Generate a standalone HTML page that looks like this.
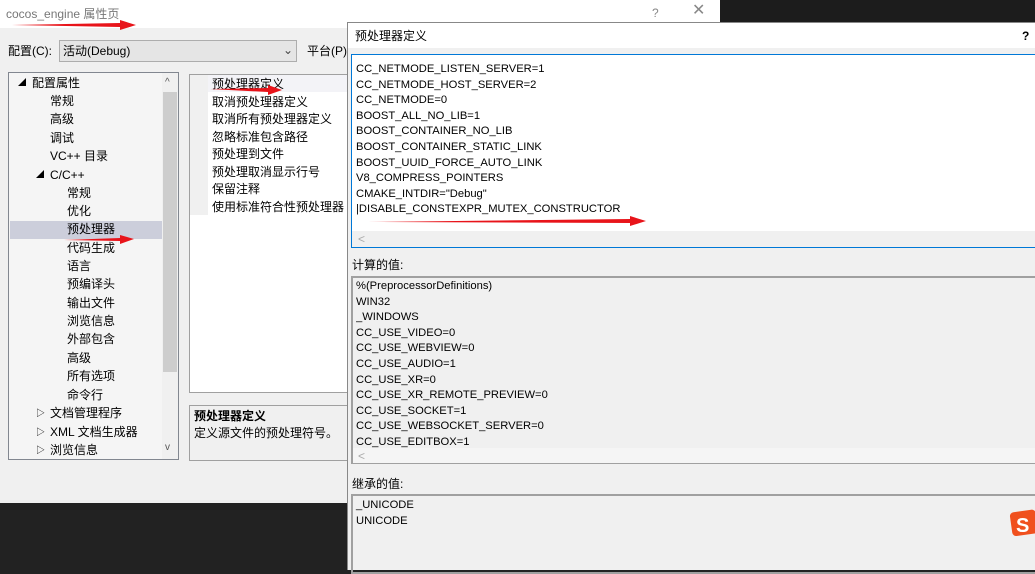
<!DOCTYPE html>
<html><head><meta charset="utf-8"><style>
*{margin:0;padding:0;box-sizing:border-box}
body{width:1035px;height:570px;overflow:hidden;background:#222;position:relative;font-family:"Liberation Sans","Noto Sans CJK SC",sans-serif;font-size:12px;color:#000}
.a{position:absolute}
.t{position:absolute;white-space:nowrap;line-height:16px}
.l{font-size:11.2px}
</style></head><body>
<div class="a" style="left:720px;top:0;width:315px;height:22px;background:#1c1c1c"></div>
<div class="a" style="left:0;top:0;width:720px;height:503px;background:#f0f0f0"></div>
<div class="a" style="left:0;top:0;width:720px;height:28px;background:#fff"></div>
<div class="t" style="left:6px;top:6px;color:#777;font-size:12px">cocos_engine 属性页</div>
<div class="t" style="left:652px;top:5px;color:#888">?</div>
<div class="t" style="left:692px;top:3px;color:#888;font-size:16px">✕</div>
<div class="t" style="left:8px;top:43px">配置(C):</div>
<div class="a" style="left:59px;top:40px;width:238px;height:22px;background:#e5e5e5;border:1px solid #adadad"></div>
<div class="t" style="left:63px;top:43px">活动(Debug)</div>
<div class="t" style="left:283px;top:42px;color:#444">⌄</div>
<div class="t" style="left:307px;top:43px">平台(P):</div>
<div class="a" style="left:8px;top:72px;width:171px;height:388px;background:#f5f5f5;border:1px solid #828790"></div>
<div class="a" style="left:162px;top:73px;width:16px;height:386px;background:#f0f0f0"></div>
<div class="a" style="left:163px;top:92px;width:14px;height:280px;background:#cdcdcd"></div>
<div class="t" style="left:165px;top:75px;font-size:10px;color:#555">^</div>
<div class="t" style="left:165px;top:440px;font-size:10px;color:#555">v</div>
<div class="a" style="left:10px;top:221px;width:152px;height:18px;background:#cccedb"></div>
<div class="t" style="left:18px;top:75px;font-size:8px">◢</div><div class="t" style="left:32px;top:75px">配置属性</div>
<div class="t" style="left:50px;top:93px">常规</div>
<div class="t" style="left:50px;top:111px">高级</div>
<div class="t" style="left:50px;top:130px">调试</div>
<div class="t" style="left:50px;top:148px">VC++ 目录</div>
<div class="t" style="left:36px;top:167px;font-size:8px">◢</div><div class="t" style="left:50px;top:167px">C/C++</div>
<div class="t" style="left:67px;top:185px">常规</div>
<div class="t" style="left:67px;top:203px">优化</div>
<div class="t" style="left:67px;top:221px">预处理器</div>
<div class="t" style="left:67px;top:240px">代码生成</div>
<div class="t" style="left:67px;top:258px">语言</div>
<div class="t" style="left:67px;top:276px">预编译头</div>
<div class="t" style="left:67px;top:295px">输出文件</div>
<div class="t" style="left:67px;top:313px">浏览信息</div>
<div class="t" style="left:67px;top:331px">外部包含</div>
<div class="t" style="left:67px;top:350px">高级</div>
<div class="t" style="left:67px;top:368px">所有选项</div>
<div class="t" style="left:67px;top:387px">命令行</div>
<div class="t" style="left:36px;top:405px;font-size:9px">▷</div><div class="t" style="left:50px;top:405px">文档管理程序</div>
<div class="t" style="left:36px;top:424px;font-size:9px">▷</div><div class="t" style="left:50px;top:424px">XML 文档生成器</div>
<div class="t" style="left:36px;top:442px;font-size:9px">▷</div><div class="t" style="left:50px;top:442px">浏览信息</div>
<div class="a" style="left:189px;top:74px;width:160px;height:319px;background:#fff;border:1px solid #a0a0a0"></div>
<div class="a" style="left:190px;top:75px;width:18px;height:140px;background:#f0f0f0"></div>
<div class="a" style="left:208px;top:75px;width:141px;height:17px;background:#f3f3f7"></div>
<div class="t" style="left:212px;top:76px">预处理器定义</div>
<div class="t" style="left:212px;top:94px">取消预处理器定义</div>
<div class="t" style="left:212px;top:111px">取消所有预处理器定义</div>
<div class="t" style="left:212px;top:129px">忽略标准包含路径</div>
<div class="t" style="left:212px;top:146px">预处理到文件</div>
<div class="t" style="left:212px;top:164px">预处理取消显示行号</div>
<div class="t" style="left:212px;top:181px">保留注释</div>
<div class="t" style="left:212px;top:199px">使用标准符合性预处理器</div>
<div class="a" style="left:189px;top:405px;width:160px;height:56px;border:1px solid #a0a0a0"></div>
<div class="t" style="left:194px;top:408px;font-weight:bold">预处理器定义</div>
<div class="t" style="left:194px;top:425px">定义源文件的预处理符号。</div>
<div class="a" style="left:347px;top:22px;width:688px;height:548px;background:#f0f0f0;border-left:1px solid #888;border-top:1px solid #888"></div>
<div class="a" style="left:348px;top:23px;width:687px;height:25px;background:#fff"></div>
<div class="t" style="left:355px;top:28px">预处理器定义</div>
<div class="t" style="left:1022px;top:28px;font-weight:bold">?</div>
<div class="a" style="left:351px;top:54px;width:690px;height:194px;background:#fff;border:1px solid #0078d7"></div>
<div class="a" style="left:352px;top:231px;width:690px;height:16px;background:#f0f0f0"></div>
<div class="t" style="left:358px;top:231px;color:#aaa">&lt;</div>
<div class="t l" style="left:356px;top:62px;line-height:15.6px">CC_NETMODE_LISTEN_SERVER=1<br>CC_NETMODE_HOST_SERVER=2<br>CC_NETMODE=0<br>BOOST_ALL_NO_LIB=1<br>BOOST_CONTAINER_NO_LIB<br>BOOST_CONTAINER_STATIC_LINK<br>BOOST_UUID_FORCE_AUTO_LINK<br>V8_COMPRESS_POINTERS<br>CMAKE_INTDIR="Debug"<br>|DISABLE_CONSTEXPR_MUTEX_CONSTRUCTOR</div>
<div class="t" style="left:352px;top:257px">计算的值:</div>
<div class="a" style="left:351px;top:276px;width:690px;height:188px;border:2px solid #a0a0a0;border-right:none"></div>
<div class="a" style="left:353px;top:448px;width:690px;height:15px;background:#f5f5f5"></div>
<div class="t" style="left:358px;top:448px;color:#aaa">&lt;</div>
<div class="a" style="left:356px;top:279px;width:300px;height:169px;overflow:hidden"><div class="t l" style="left:0;top:0;line-height:15.6px">%(PreprocessorDefinitions)<br>WIN32<br>_WINDOWS<br>CC_USE_VIDEO=0<br>CC_USE_WEBVIEW=0<br>CC_USE_AUDIO=1<br>CC_USE_XR=0<br>CC_USE_XR_REMOTE_PREVIEW=0<br>CC_USE_SOCKET=1<br>CC_USE_WEBSOCKET_SERVER=0<br>CC_USE_EDITBOX=1</div></div>
<div class="t" style="left:352px;top:476px">继承的值:</div>
<div class="a" style="left:351px;top:494px;width:690px;height:80px;border:2px solid #a0a0a0;border-right:none"></div>
<div class="t l" style="left:356px;top:498px;line-height:15.6px">_UNICODE<br>UNICODE</div>
<svg class="a" style="left:1008px;top:508px" width="27" height="32"><rect x="3" y="3" width="26" height="24" rx="4" fill="#f0501e" transform="rotate(-8 15 15)"/><text x="8" y="24" font-size="20" font-weight="bold" fill="#fff" font-family="Liberation Sans">S</text></svg>
<svg class="a" style="left:0;top:0" width="1035" height="570">
<g fill="#e8141a">
<polygon points="12,25 120,23 120,20 136,25 120,30 120,27"/>
<polygon points="210,89 268,88 268,85 282,90 268,95 268,92"/>
<polygon points="64,240 120,238 120,235 134,239 120,244 120,241"/>
<polygon points="368,222 630,219 630,216 646,221 630,226 630,223"/>
</g></svg>
</body></html>
